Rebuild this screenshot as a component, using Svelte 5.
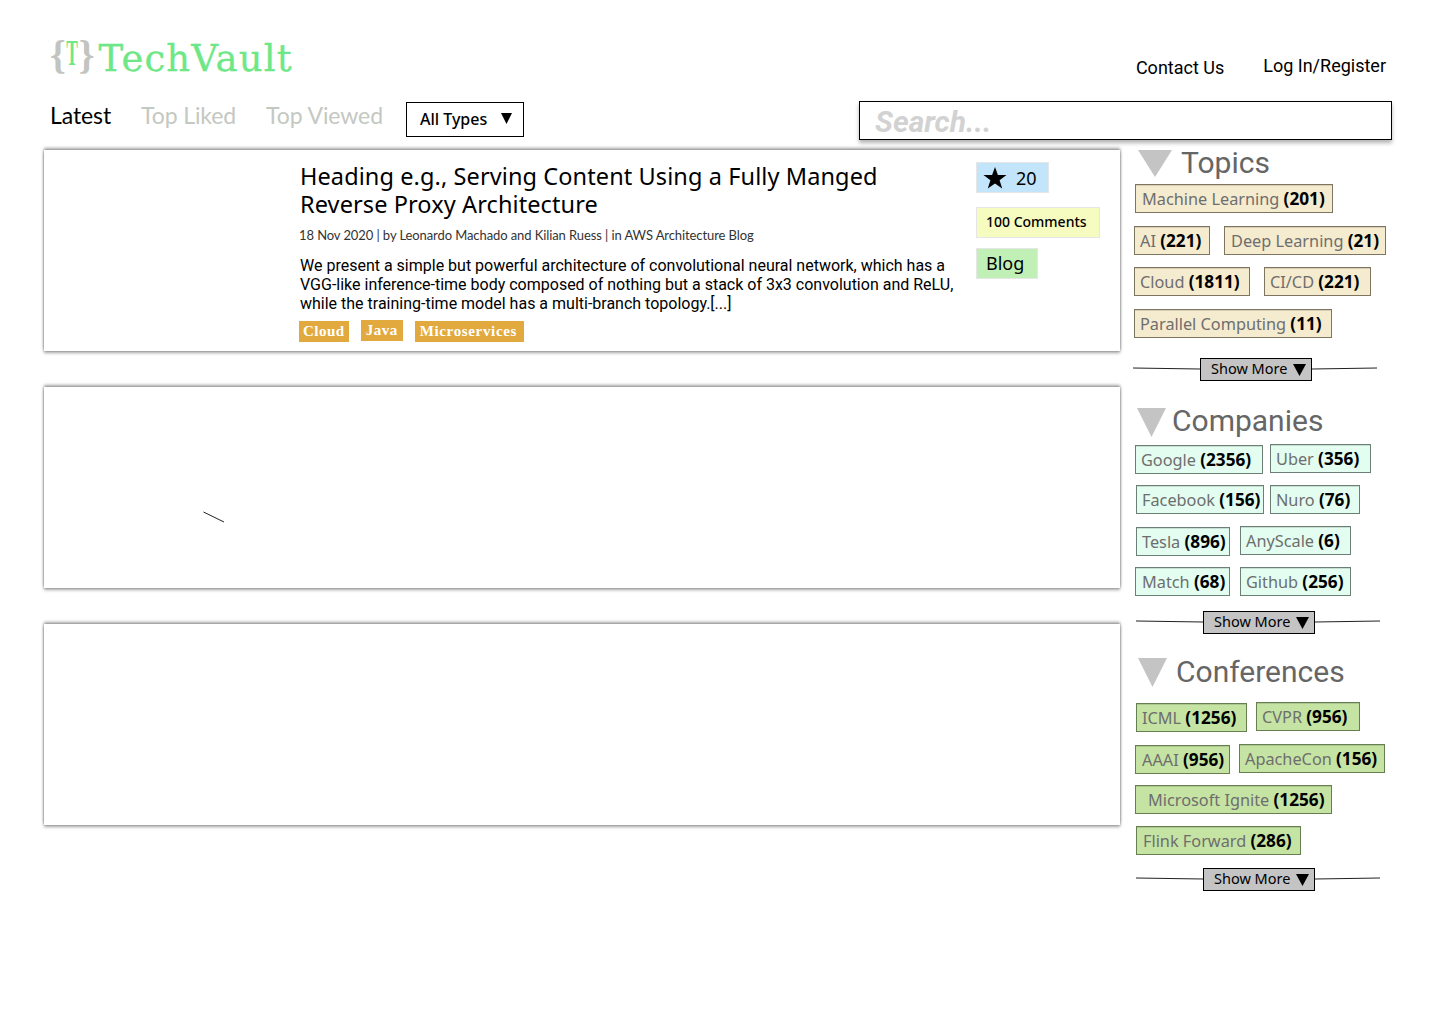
<script lang="ts">
  const sections = [
    {
      title: "Topics",
      kind: "topic",
      tri: { w: 34, h: 27, left: 5, dy: 0 },
      titleGap: 9,
      headTop: 0,
      first: 5,
      show: { top: 20 },
      rows: [
        { top: 0, tags: [{ name: "Machine Learning", n: 201, w: 198, x: 2, pad: 6 }] },
        { top: 13, tags: [{ name: "AI", n: 221, w: 76, x: 1, pad: 5 }, { name: "Deep Learning", n: 21, w: 162, x: 14, pad: 6 }] },
        { top: 12, tags: [{ name: "Cloud", n: 1811, w: 116, x: 1, pad: 5 }, { name: "CI/CD", n: 221, w: 107, x: 14, pad: 5 }] },
        { top: 13, tags: [{ name: "Parallel Computing", n: 11, w: 198, x: 1, pad: 5 }] }
      ]
    },
    {
      title: "Companies",
      kind: "company",
      tri: { w: 29, h: 29, left: 4, dy: 3 },
      titleGap: 6,
      headTop: 24,
      first: 7,
      show: { top: 15 },
      rows: [
        { top: 0, tags: [{ name: "Google", n: 2356, w: 128, x: 2, pad: 5, dy: 1 }, { name: "Uber", n: 356, w: 101, x: 7, pad: 5 }] },
        { top: 12, tags: [{ name: "Facebook", n: 156, w: 128, x: 3, pad: 5 }, { name: "Nuro", n: 76, w: 90, x: 6, pad: 5 }] },
        { top: 12, tags: [{ name: "Tesla", n: 896, w: 94, x: 3, pad: 5, dy: 1 }, { name: "AnyScale", n: 6, w: 111, x: 10, pad: 5 }] },
        { top: 12, tags: [{ name: "Match", n: 68, w: 95, x: 2, pad: 6 }, { name: "Github", n: 256, w: 111, x: 10, pad: 5 }] }
      ]
    },
    {
      title: "Conferences",
      kind: "conf",
      tri: { w: 29, h: 29, left: 5, dy: 0 },
      titleGap: 9,
      headTop: 22,
      first: 14,
      show: { top: 13 },
      rows: [
        { top: 0, tags: [{ name: "ICML", n: 1256, w: 111, x: 3, pad: 5, dy: 1 }, { name: "CVPR", n: 956, w: 104, x: 9, pad: 5 }] },
        { top: 13, tags: [{ name: "AAAI", n: 956, w: 95, x: 2, pad: 6, dy: 1 }, { name: "ApacheCon", n: 156, w: 146, x: 9, pad: 5 }] },
        { top: 12, tags: [{ name: "Microsoft Ignite", n: 1256, w: 197, x: 2, pad: 12 }] },
        { top: 12, tags: [{ name: "Flink Forward", n: 286, w: 165, x: 3, pad: 6 }] }
      ]
    }
  ];
</script>

<div class="page">
  <header class="top">
    <div class="logo">
      <span class="logo__mark"><span class="logo__brace">&#123;</span><span class="logo__t">T</span><span class="logo__brace">&#125;</span></span>
      <span class="logo__name">TechVault</span>
    </div>
    <nav class="top__links">
      <a href="#contact" class="top__contact">Contact Us</a>
      <a href="#login" class="top__login">Log In/Register</a>
    </nav>
  </header>

  <div class="filters">
    <span class="filters__tab filters__tab--on">Latest</span>
    <span class="filters__tab">Top Liked</span>
    <span class="filters__tab">Top Viewed</span>
    <div class="types">
      <span>All Types</span>
      <svg width="11" height="11" viewBox="0 0 11 11"><polygon points="0,0 11,0 5.5,11" fill="#000" /></svg>
    </div>
    <div class="search">Search...</div>
  </div>

  <div class="content">
    <main class="cards">
      <article class="card card--post">
        <div class="post">
          <h2 class="post__title">Heading e.g., Serving Content Using a Fully Manged Reverse Proxy Architecture</h2>
          <p class="post__meta">18 Nov 2020 | by Leonardo Machado and Kilian Ruess | in AWS Architecture Blog</p>
          <p class="post__text">We present a simple but powerful architecture of convolutional neural network, which has a VGG-like inference-time body composed of nothing but a stack of 3x3 convolution and ReLU, while the training-time model has a multi-branch topology.[...]</p>
          <div class="post__tags">
            <span class="label label--cloud">Cloud</span>
            <span class="label label--up">Java</span>
            <span class="label label--wide">Microservices</span>
          </div>
        </div>
        <aside class="stats">
          <div class="stat stat--likes">
            <svg width="24" height="22" viewBox="0 0 24 22"><polygon points="12,0 14.9,8 23.5,8 16.6,13.2 19.2,21.5 12,16.4 4.8,21.5 7.4,13.2 0.5,8 9.1,8" fill="#000" /></svg>
            <span>20</span>
          </div>
          <div class="stat stat--comments">100 Comments</div>
          <div class="stat stat--type">Blog</div>
        </aside>
      </article>
      <article class="card">
        <svg class="card__stray" width="22" height="12" viewBox="0 0 22 12"><line x1="0.5" y1="1" x2="21" y2="11" stroke="#222" /></svg>
      </article>
      <article class="card"></article>
    </main>

    <aside class="side">
      {#each sections as s}
        <section class="group group--{s.kind}" style="margin-top: {s.headTop}px">
          <div class="group__head">
            <svg width={s.tri.w} height={s.tri.h} viewBox="0 0 {s.tri.w} {s.tri.h}" style="margin-left: {s.tri.left}px; margin-top: {s.tri.dy}px">
              <polygon points="0,0 {s.tri.w},0 {s.tri.w / 2},{s.tri.h}" fill="#c4c4c4" />
            </svg>
            <h3 class="group__title" style="margin-left: {s.titleGap}px">{s.title}</h3>
          </div>
          <div class="group__rows" style="margin-top: {s.first}px">
            {#each s.rows as row}
              <div class="row" style="margin-top: {row.top}px">
                {#each row.tags as t}
                  <span class="chip" style="width: {t.w}px; margin-left: {t.x}px; margin-top: {t.dy ?? 0}px; padding-left: {t.pad}px">{t.name} <b>({t.n})</b></span>
                {/each}
              </div>
            {/each}
          </div>
          <div class="more" style="margin-top: {s.show.top}px">
            <i class="more__line more__line--l"></i>
            <button class="more__btn" type="button">
              <span>Show More</span>
              <svg width="13" height="12" viewBox="0 0 13 12"><polygon points="0,0 13,0 6.5,12" fill="#000" /></svg>
            </button>
            <i class="more__line more__line--r"></i>
          </div>
        </section>
      {/each}
    </aside>
  </div>
</div>

<style>
  :global(body) {
    margin: 0;
    background: #fff;
  }

  .page {
    box-sizing: border-box;
    width: 1440px;
    height: 1024px;
    padding-left: 44px;
    color: #000;
    font-family: "Noto Sans", sans-serif;
    overflow: hidden;
  }

  .top {
    display: flex;
    justify-content: space-between;
    height: 100px;
  }

  .logo {
    display: flex;
    align-items: baseline;
    gap: 4px;
    height: 60px;
    padding: 28px 0 0 6px;
    font-family: "DejaVu Serif", serif;
    font-size: 37px;
    line-height: 60px;
  }

  .logo__mark {
    display: inline-flex;
    align-items: baseline;
    font-family: "Liberation Serif", serif;
    font-size: 40px;
    transform: translateY(-3px);
  }

  .logo__brace {
    color: #c2c5bf;
    font-weight: 700;
  }

  .logo__t {
    display: inline-block;
    margin: 0 -5.5px;
    color: #6ee787;
    font-size: 36px;
    font-weight: 700;
    transform: translateY(-3px) scaleX(0.48);
  }

  .logo__name {
    color: #6ee787;
    letter-spacing: 1.1px;
    -webkit-text-stroke: 0.3px #6ee787;
  }

  .top__links {
    display: flex;
    gap: 39px;
    padding: 54px 54px 0 0;
    font-family: Roboto, sans-serif;
    font-size: 18px;
    line-height: 24px;
  }

  .top__links a {
    color: #000;
    text-decoration: none;
  }

  .top__contact {
    margin-top: 2px;
  }

  .filters {
    display: flex;
    align-items: flex-start;
    height: 50px;
    padding: 0 48px 0 6px;
  }

  .filters__tab {
    margin-right: 30px;
    font-family: "Lato", sans-serif;
    font-size: 23px;
    line-height: 30px;
    letter-spacing: -0.1px;
    color: #c4c8c2;
  }

  .filters__tab--on {
    color: #000;
  }

  .types {
    box-sizing: border-box;
    display: flex;
    align-items: center;
    justify-content: space-between;
    width: 118px;
    height: 35px;
    margin: 2px 0 0 -7px;
    padding: 0 11px 2px 13px;
    border: 1px solid #000;
    font-size: 16px;
    font-weight: 500;
  }

  .search {
    box-sizing: border-box;
    width: 533px;
    height: 39px;
    margin: 1px 0 0 auto;
    padding-left: 15px;
    border: 1px solid #000;
    box-shadow: 0 3px 4px rgba(0, 0, 0, 0.3);
    font-family: Roboto, sans-serif;
    font-size: 30px;
    font-style: italic;
    font-weight: 700;
    line-height: 40px;
    color: #d2d2d2;
  }

  .content {
    display: flex;
    align-items: flex-start;
  }

  .cards {
    display: flex;
    flex-direction: column;
    gap: 36px;
    width: 1076px;
  }

  .card {
    box-sizing: border-box;
    position: relative;
    display: flex;
    height: 201px;
    background: #fff;
    box-shadow:
      0 2px 3px rgba(0, 0, 0, 0.35),
      0 -2px 3px rgba(0, 0, 0, 0.35),
      0 0 2px rgba(0, 0, 0, 0.2);
  }

  .card__stray {
    position: absolute;
    left: 159px;
    top: 124px;
  }

  .post {
    width: 660px;
    margin-left: 255px;
    padding-top: 12px;
  }

  .post__title {
    margin: 0 0 0 1px;
    font-size: 23.5px;
    font-weight: 400;
    line-height: 28px;
    letter-spacing: 0.1px;
  }

  .post__meta {
    margin: 8px 0 0;
    font-family: "Lato", sans-serif;
    font-size: 13px;
    line-height: 18px;
    letter-spacing: -0.09px;
    color: #333;
  }

  .post__text {
    margin: 12px 0 0 1px;
    font-family: Roboto, sans-serif;
    font-size: 16px;
    line-height: 19px;
  }

  .post__tags {
    display: flex;
    align-items: flex-start;
    gap: 12px;
    margin-top: 8px;
  }

  .label {
    height: 21px;
    padding: 0 5px;
    background: #e2aa3e;
    color: #fff;
    font-family: "Liberation Serif", serif;
    font-size: 15px;
    font-weight: 700;
    line-height: 21px;
    letter-spacing: 0.5px;
  }

  .label--cloud {
    padding: 0 4px;
  }

  .label--up {
    margin-top: -1px;
  }

  .label--wide {
    padding-right: 7px;
    letter-spacing: 0.65px;
  }

  .stats {
    display: flex;
    flex-direction: column;
    align-items: flex-start;
    margin-left: 17px;
    padding-top: 12px;
  }

  .stat {
    box-sizing: border-box;
    display: flex;
    align-items: center;
    height: 31px;
    border: 1px solid #e6e6e6;
  }

  .stat--likes {
    width: 73px;
    gap: 9px;
    padding-left: 6px;
    background: #c2e5fb;
    font-size: 18px;
  }

  .stat--comments {
    width: 124px;
    margin-top: 14px;
    padding: 0 0 2px 9px;
    background: #f6fbbf;
    font-size: 14px;
    font-weight: 500;
  }

  .stat--type {
    width: 62px;
    margin-top: 10px;
    padding: 0 0 2px 9px;
    background: #c0f0b6;
    font-size: 18px;
  }

  .side {
    width: 263px;
    margin-left: 13px;
    margin-top: -3px;
  }

  .group__head {
    display: flex;
    align-items: center;
    height: 32px;
  }

  .group__title {
    margin: 0;
    font-family: Roboto, sans-serif;
    font-size: 30px;
    font-weight: 400;
    line-height: 32px;
    color: #666;
  }

  .row {
    display: flex;
    align-items: flex-start;
    height: 29px;
  }

  .chip {
    box-sizing: border-box;
    display: block;
    height: 29px;
    border: 1px solid #7d7560;
    box-shadow: inset 0 1px 0 rgba(0, 0, 0, 0.12);
    font-size: 16.3px;
    line-height: 27px;
    color: #6e6e6e;
    white-space: nowrap;
  }

  .chip b {
    color: #000;
    font-size: 17.2px;
    font-weight: 700;
  }

  .group--topic .chip {
    background: #f5ebcf;
  }

  .group--company .chip {
    background: #e3fdf0;
    border-color: #6b7f76;
  }

  .group--conf .chip {
    background: #c5e3a3;
    border-color: #657f50;
  }

  .more {
    display: flex;
    align-items: center;
    height: 23px;
  }

  .group--company .more,
  .group--conf .more {
    margin-left: 3px;
  }

  .more__line {
    display: block;
    width: 67px;
    height: 1px;
    margin-top: -2px;
    background: #222;
  }

  .more__line--l {
    transform: rotate(0.8deg);
  }

  .more__line--r {
    width: 65px;
    transform: rotate(-0.8deg);
  }

  .more__btn {
    box-sizing: border-box;
    display: flex;
    align-items: center;
    justify-content: space-between;
    width: 112px;
    height: 23px;
    padding: 0 5px 0 10px;
    border: 1px solid #000;
    background: #c4c4c4;
    color: #000;
    font-family: "Noto Sans", sans-serif;
    font-size: 14.5px;
    line-height: 20px;
  }

  .more__btn span {
    margin-top: -4px;
  }
</style>
